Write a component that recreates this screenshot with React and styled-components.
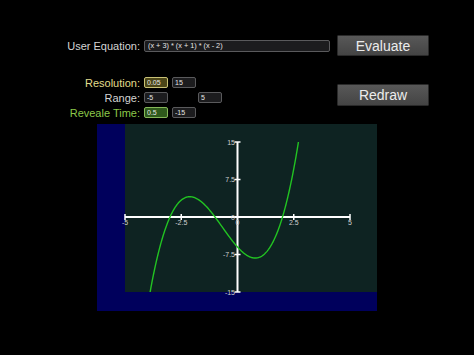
import styled, { createGlobalStyle } from "styled-components";

const GlobalStyle = createGlobalStyle`
  html, body {
    margin: 0;
    background: #000;
    font-family: "Liberation Sans", Arial, sans-serif;
  }
`;

const f = (x) => (x + 3) * (x + 1) * (x - 2);
const px = (x) => 112.5 + x * 22.5;
const py = (y) => 93 - y * 5;

const curvePath = () => {
  const pts = [];
  for (let x = -5; x <= 5.0001; x += 0.02) {
    pts.push(`${px(x).toFixed(2)},${py(f(x)).toFixed(2)}`);
  }
  return "M" + pts.join(" L");
};

const xTicks = [
  { v: -5, t: "-5" },
  { v: -2.5, t: "-2.5" },
  { v: 0, t: "0" },
  { v: 2.5, t: "2.5" },
  { v: 5, t: "5" },
];
const yTicks = [
  { v: 15, t: "15" },
  { v: 7.5, t: "7.5" },
  { v: 0, t: "0" },
  { v: -7.5, t: "-7.5" },
  { v: -15, t: "-15" },
];

const rows = [
  { label: "Resolution:", tone: "yellow", a: "0.05", b: "15", gap: 4 },
  { label: "Range:", tone: "plain", a: "-5", b: "5", gap: 30 },
  { label: "Reveale Time:", tone: "green", a: "0.5", b: "-15", gap: 4 },
];

const App = () => (
  <Page>
    <GlobalStyle />
    <TopRow>
      <Label>User Equation:</Label>
      <EquationInput defaultValue="(x + 3) * (x + 1) * (x - 2)" />
      <Button>Evaluate</Button>
    </TopRow>
    <FormSection>
      <Form>
        {rows.map((r) => (
          <FormRow key={r.label}>
            <Label $tone={r.tone}>{r.label}</Label>
            <SmallInput $tone={r.tone} defaultValue={r.a} />
            <SmallInput style={{ marginLeft: r.gap }} defaultValue={r.b} />
          </FormRow>
        ))}
      </Form>
      <RedrawButton>Redraw</RedrawButton>
    </FormSection>
    <ChartPanel>
      <Plot width="252" height="168">
        <defs>
          <clipPath id="plotClip">
            <rect x="0" y="18" width="252" height="150" />
          </clipPath>
        </defs>
        <rect x="0" y="0" width="252" height="168" fill="#0e2322" />
        <line x1="0" y1="93" x2="225" y2="93" stroke="#fff" strokeWidth="2" />
        <line x1="112.5" y1="18" x2="112.5" y2="168" stroke="#fff" strokeWidth="2" />
        {xTicks
          .filter((t) => t.v !== 0)
          .map((t) => (
            <line
              key={t.t}
              x1={px(t.v)}
              y1="90"
              x2={px(t.v)}
              y2="96"
              stroke="#fff"
              strokeWidth="1.5"
            />
          ))}
        {yTicks.map((t) => (
          <line
            key={t.t}
            x1="109.5"
            y1={py(t.v)}
            x2="115.5"
            y2={py(t.v)}
            stroke="#fff"
            strokeWidth="1.5"
          />
        ))}
        <g fontFamily="Liberation Sans, Arial, sans-serif" fontSize="7" fill="#d0d0d0">
          {xTicks.map((t) => (
            <text key={t.t} x={px(t.v)} y="101" textAnchor="middle">
              {t.t}
            </text>
          ))}
          {yTicks.map((t) => (
            <text key={t.t} x="110" y={py(t.v) + 2.5} textAnchor="end">
              {t.t}
            </text>
          ))}
        </g>
        <path
          d={curvePath()}
          fill="none"
          stroke="#22c322"
          strokeWidth="1.4"
          clipPath="url(#plotClip)"
        />
      </Plot>
    </ChartPanel>
  </Page>
);
export default App;

const toneText = { yellow: "#e2dd8c", green: "#8cc84a", plain: "#d4d4d4" };
const toneBg = { yellow: "#4c4618", green: "#2f5a1c", plain: "#1c1c1e" };
const toneBorder = { yellow: "#c9c276", green: "#86b85a", plain: "#5a5a5c" };

const Page = styled.div`
  padding: 35px 0 0 64px;
  width: 410px;
  height: 320px;
  background: #000;
`;

const TopRow = styled.div`
  display: flex;
  align-items: center;
  height: 21px;
`;

const Label = styled.div`
  width: 80px;
  padding-right: 4px;
  box-sizing: border-box;
  text-align: right;
  font-size: 11px;
  white-space: nowrap;
  color: ${(p) => toneText[p.$tone] || "#d4d4d4"};
`;

const EquationInput = styled.input`
  width: 186px;
  height: 12px;
  box-sizing: border-box;
  padding: 0 3px;
  margin: 0;
  background: #1c1c1e;
  border: 1px solid #5a5a5c;
  border-radius: 2px;
  color: #e6e6e6;
  font-family: "Liberation Sans", Arial, sans-serif;
  font-size: 7.3px;
  outline: none;
`;

const Button = styled.button`
  width: 92px;
  height: 21px;
  margin: 0 0 0 7px;
  padding: 0;
  background: linear-gradient(#585858, #444);
  border: 1px solid #2a2a2a;
  border-radius: 1px;
  color: #ececec;
  font-family: "Liberation Sans", Arial, sans-serif;
  font-size: 14px;
`;

const RedrawButton = styled(Button)`
  height: 22px;
  margin-top: 7px;
  margin-left: 7px;
  align-self: flex-start;
`;

const FormSection = styled.div`
  display: flex;
  margin-top: 21px;
`;

const Form = styled.div`
  width: 266px;
  display: flex;
  flex-direction: column;
  gap: 4px;
`;

const FormRow = styled.div`
  display: flex;
  align-items: center;
  height: 11px;
`;

const SmallInput = styled.input`
  width: 24px;
  height: 11px;
  box-sizing: border-box;
  padding: 0 2px;
  margin: 0;
  background: ${(p) => toneBg[p.$tone] || toneBg.plain};
  border: 1px solid ${(p) => toneBorder[p.$tone] || toneBorder.plain};
  border-radius: 2px;
  color: #e6e6e6;
  font-family: "Liberation Sans", Arial, sans-serif;
  font-size: 7px;
  outline: none;
`;

const ChartPanel = styled.div`
  width: 252px;
  margin: 6px 0 0 33px;
  padding: 0 0 19px 28px;
  background: #00005c;
`;

const Plot = styled.svg`
  display: block;
  overflow: visible;
`;
